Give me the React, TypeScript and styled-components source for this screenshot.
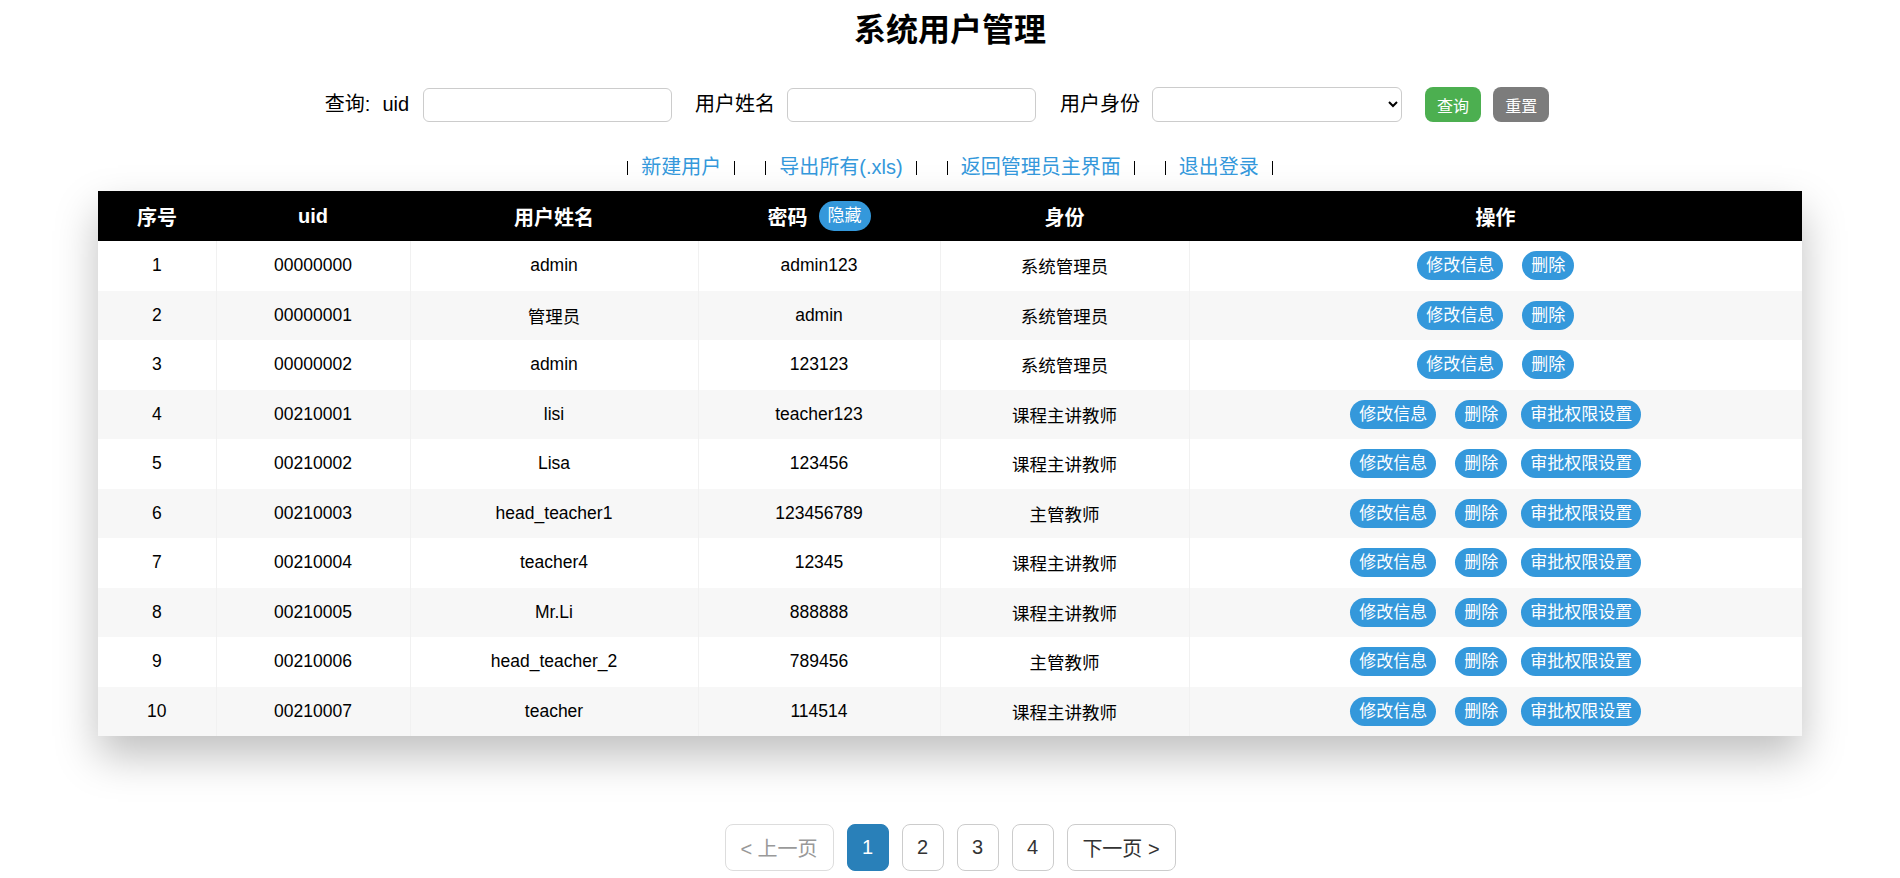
import React from 'react';
import styled, { createGlobalStyle } from 'styled-components';

const GlobalStyle = createGlobalStyle`
    body {
        margin: 0;
        background: #ffffff;
        color: #000000;
        font-family: "Liberation Sans", "Noto Sans CJK SC", sans-serif;
    }
`;

export const Page = styled.div`
    padding-top: 10px;
`;

export const Title = styled.h1`
    margin: 0;
    text-align: center;
    font-size: 32px;
    line-height: 41px;
    font-weight: 700;
`;

export const SearchBar = styled.div`
    display: flex;
    align-items: center;
    justify-content: center;
    margin-top: 36px;
    padding-right: 26px;
    height: 35px;
    font-size: 20px;
`;

export const SearchLabel = styled.span<{ $gap: number }>`
    margin-right: ${p => p.$gap}px;
    line-height: 35px;
    white-space: nowrap;
`;

export const SearchInput = styled.input<{ $gap: number }>`
    box-sizing: border-box;
    width: 249px;
    height: 34px;
    margin-right: ${p => p.$gap}px;
    border: 1px solid #cccccc;
    border-radius: 6px;
    padding: 0 8px;
    font-size: 16px;
    outline: none;
`;

export const SearchSelect = styled.select`
    box-sizing: border-box;
    width: 250px;
    height: 35px;
    margin-right: 23px;
    border: 1px solid #cccccc;
    border-radius: 6px;
    background: #ffffff;
    font-size: 16px;
`;

export const SearchButton = styled.button<{ $tone: 'green' | 'gray' }>`
    height: 35px;
    padding: 0 12px;
    margin-right: ${p => (p.$tone === 'green' ? 12 : 0)}px;
    border: none;
    border-radius: 8px;
    background: ${p => (p.$tone === 'green' ? '#4caf50' : '#7c7c7c')};
    color: #ffffff;
    font-family: "Liberation Sans", "Noto Sans CJK SC", sans-serif;
    font-size: 16px;
    cursor: pointer;
`;

export const NavBar = styled.div`
    display: flex;
    justify-content: center;
    align-items: center;
    gap: 30px;
    margin-top: 30px;
    height: 30px;
`;

export const NavGroup = styled.span`
    display: inline-flex;
    align-items: center;
    gap: 13px;
`;

export const Pipe = styled.span`
    display: inline-block;
    width: 1px;
    height: 14px;
    margin-top: 1px;
    background: #000000;
`;

export const NavLink = styled.a`
    color: #3498db;
    font-size: 20px;
    line-height: 30px;
    text-decoration: none;
    cursor: pointer;
`;

export const TableWrap = styled.div`
    width: 1704px;
    margin: 9px auto 0;
    box-shadow: 0 20px 40px rgba(0, 0, 0, 0.25);
`;

export const UserTable = styled.table`
    width: 100%;
    border-collapse: collapse;
    table-layout: fixed;
`;

export const HeadCell = styled.th`
    height: 50px;
    padding: 0;
    background: #000000;
    color: #ffffff;
    font-size: 20px;
    font-weight: 700;
    text-align: center;
    vertical-align: middle;
`;

export const HeadInner = styled.span`
    display: inline-flex;
    align-items: center;
    gap: 11px;
`;

export const Row = styled.tr`
    height: 49.5px;
    &:nth-child(even) {
        background: #f7f7f7;
    }
`;

export const Cell = styled.td`
    padding: 0;
    text-align: center;
    vertical-align: middle;
    font-size: 17.5px;
    border-right: 1px solid #f1f1f1;
    &:last-child {
        border-right: none;
    }
`;

export const Actions = styled.div`
    display: flex;
    justify-content: center;
    align-items: center;
`;

export const Pill = styled.button<{ $gap?: number }>`
    height: 29px;
    padding: 0 9px;
    margin-left: ${p => p.$gap ?? 0}px;
    border: none;
    border-radius: 15px;
    background: #3498db;
    color: #ffffff;
    font-family: "Liberation Sans", "Noto Sans CJK SC", sans-serif;
    font-size: 17px;
    line-height: 29px;
    cursor: pointer;
`;

export const HeadPill = styled.span`
    display: inline-block;
    height: 30px;
    padding: 0 9px;
    border-radius: 15px;
    background: #3498db;
    color: #ffffff;
    font-size: 17px;
    font-weight: 400;
    line-height: 30px;
`;

export const Pager = styled.div`
    display: flex;
    justify-content: center;
    gap: 13px;
    margin-top: 88px;
`;

export const PageButton = styled.button<{ $active?: boolean; $disabled?: boolean; $wide?: boolean }>`
    box-sizing: border-box;
    height: 47px;
    min-width: ${p => (p.$wide ? 109 : 42)}px;
    padding: 0 14px;
    border: 1px solid ${p => (p.$active ? '#2980b9' : p.$disabled ? '#dddddd' : '#cccccc')};
    border-radius: 8px;
    background: ${p => (p.$active ? '#2980b9' : '#ffffff')};
    color: ${p => (p.$active ? '#ffffff' : p.$disabled ? '#999999' : '#333333')};
    font-family: "Liberation Sans", "Noto Sans CJK SC", sans-serif;
    font-size: 20px;
    cursor: ${p => (p.$disabled ? 'default' : 'pointer')};
`;

type TUser = {
    uid: string;
    name: string;
    password: string;
    role: string;
};

const users: TUser[] = [
    { uid: '00000000', name: 'admin', password: 'admin123', role: '系统管理员' },
    { uid: '00000001', name: '管理员', password: 'admin', role: '系统管理员' },
    { uid: '00000002', name: 'admin', password: '123123', role: '系统管理员' },
    { uid: '00210001', name: 'lisi', password: 'teacher123', role: '课程主讲教师' },
    { uid: '00210002', name: 'Lisa', password: '123456', role: '课程主讲教师' },
    { uid: '00210003', name: 'head_teacher1', password: '123456789', role: '主管教师' },
    { uid: '00210004', name: 'teacher4', password: '12345', role: '课程主讲教师' },
    { uid: '00210005', name: 'Mr.Li', password: '888888', role: '课程主讲教师' },
    { uid: '00210006', name: 'head_teacher_2', password: '789456', role: '主管教师' },
    { uid: '00210007', name: 'teacher', password: '114514', role: '课程主讲教师' },
];

const columnWidths = [118, 194, 288, 242, 249, 613];

const navItems = ['新建用户', '导出所有(.xls)', '返回管理员主界面', '退出登录'];

const App = (): React.ReactElement => {
    return (
        <Page>
            <GlobalStyle />
            <Title>系统用户管理</Title>

            <SearchBar>
                <SearchLabel $gap={12}>查询:</SearchLabel>
                <SearchLabel $gap={14}>uid</SearchLabel>
                <SearchInput $gap={23} />
                <SearchLabel $gap={12}>用户姓名</SearchLabel>
                <SearchInput $gap={24} />
                <SearchLabel $gap={12}>用户身份</SearchLabel>
                <SearchSelect>
                    <option value=""></option>
                    <option>系统管理员</option>
                    <option>课程主讲教师</option>
                    <option>主管教师</option>
                </SearchSelect>
                <SearchButton $tone="green">查询</SearchButton>
                <SearchButton $tone="gray">重置</SearchButton>
            </SearchBar>

            <NavBar>
                {navItems.map(item => (
                    <NavGroup key={item}>
                        <Pipe />
                        <NavLink>{item}</NavLink>
                        <Pipe />
                    </NavGroup>
                ))}
            </NavBar>

            <TableWrap>
                <UserTable>
                    <colgroup>
                        {columnWidths.map((w, i) => (
                            <col key={i} style={{ width: w }} />
                        ))}
                    </colgroup>
                    <thead>
                        <tr>
                            <HeadCell>序号</HeadCell>
                            <HeadCell>uid</HeadCell>
                            <HeadCell>用户姓名</HeadCell>
                            <HeadCell>
                                <HeadInner>
                                    密码
                                    <HeadPill>隐藏</HeadPill>
                                </HeadInner>
                            </HeadCell>
                            <HeadCell>身份</HeadCell>
                            <HeadCell>操作</HeadCell>
                        </tr>
                    </thead>
                    <tbody>
                        {users.map((u, i) => (
                            <Row key={u.uid}>
                                <Cell>{i + 1}</Cell>
                                <Cell>{u.uid}</Cell>
                                <Cell>{u.name}</Cell>
                                <Cell>{u.password}</Cell>
                                <Cell>{u.role}</Cell>
                                <Cell>
                                    <Actions>
                                        <Pill>修改信息</Pill>
                                        <Pill $gap={19}>删除</Pill>
                                        {u.role !== '系统管理员' && <Pill $gap={14}>审批权限设置</Pill>}
                                    </Actions>
                                </Cell>
                            </Row>
                        ))}
                    </tbody>
                </UserTable>
            </TableWrap>

            <Pager>
                <PageButton $wide $disabled>&lt; 上一页</PageButton>
                <PageButton $active>1</PageButton>
                <PageButton>2</PageButton>
                <PageButton>3</PageButton>
                <PageButton>4</PageButton>
                <PageButton $wide>下一页 &gt;</PageButton>
            </Pager>
        </Page>
    );
};

export default App;
